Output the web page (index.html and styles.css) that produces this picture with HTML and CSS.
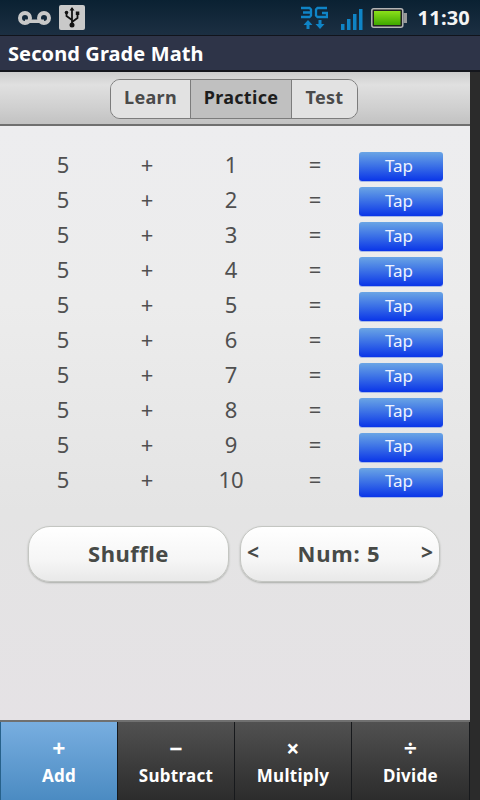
FILE: index.html
```html
<!DOCTYPE html>
<html lang="en">
<head>
<meta charset="utf-8">
<title>Second Grade Math</title>
<link rel="stylesheet" href="styles.css">
</head>
<body>
<div class="status">
  <svg class="i-vm" viewBox="0 0 33 14"><circle cx="7" cy="7" r="5" fill="none" stroke="#c8c8c8" stroke-width="4"/><circle cx="26" cy="7" r="5" fill="none" stroke="#c8c8c8" stroke-width="4"/><rect x="7" y="8.500" width="19" height="3.500" fill="#c8c8c8"/></svg>
  <svg class="i-usb" viewBox="0 0 26 25"><rect width="26" height="25" rx="2" fill="#c9c9c9"/><path d="M13 3v17M13 15L7.500 11V8M13 17l5.500-4V9" fill="none" stroke="#111" stroke-width="1.800"/><path d="M13 2l-2.500 3.500h5z" fill="#111"/><circle cx="7.500" cy="7.500" r="1.800" fill="#111"/><rect x="16.800" y="6.500" width="3.500" height="3.500" fill="#111"/><circle cx="13" cy="20" r="2.500" fill="#111"/></svg>
  <span class="grow"></span>
  <svg class="i-3g" viewBox="0 0 28 24"><path d="M1 2h8.500l1.500 1.500v6L9.500 11H1M3 6.500h8M27 2H17.500L16 3.500v6l1.500 1.500H27V7h-5" fill="none" stroke="#0f84c6" stroke-width="2.300"/><path d="M8 14l-4.500 5H6.500v4h3v-4h3zM20 23l4.500-5H21.500v-4h-3v4h-3z" fill="#0f84c6"/></svg>
  <svg class="i-sig" viewBox="0 0 22 21"><path d="M0 15h3.500v6H0zM6 10h3.500v11H6zM12 5h3.500v16H12zM18 0h3.500v21H18z" fill="#0f84c6"/></svg>
  <svg class="i-bat" viewBox="0 0 36 20"><rect x=".8" y=".8" width="31" height="18.400" rx="2" fill="#222" stroke="#b5b5b5" stroke-width="1.500"/><rect x="3" y="3" width="26.500" height="14" fill="url(#g)"/><rect x="32.500" y="5" width="3.500" height="10" fill="#999"/><defs><linearGradient id="g" x1="0" y1="0" x2="0" y2="1"><stop offset="0" stop-color="#8be01a"/><stop offset="1" stop-color="#3fa800"/></linearGradient></defs></svg>
  <span class="clock">11:30</span>
</div>
<div class="title">Second Grade Math</div>
<div class="main">
  <div class="content">
    <div class="tabbar">
      <div class="seg">
        <span class="seg-item seg-learn">Learn</span>
        <span class="seg-item seg-practice">Practice</span>
        <span class="seg-item seg-test">Test</span>
      </div>
    </div>
    <div class="panel">
      <div class="rows">
        <div class="row"><span>5</span><span>+</span><span>1</span><span>=</span><button class="tap">Tap</button></div>
        <div class="row"><span>5</span><span>+</span><span>2</span><span>=</span><button class="tap">Tap</button></div>
        <div class="row"><span>5</span><span>+</span><span>3</span><span>=</span><button class="tap">Tap</button></div>
        <div class="row"><span>5</span><span>+</span><span>4</span><span>=</span><button class="tap">Tap</button></div>
        <div class="row"><span>5</span><span>+</span><span>5</span><span>=</span><button class="tap">Tap</button></div>
        <div class="row"><span>5</span><span>+</span><span>6</span><span>=</span><button class="tap">Tap</button></div>
        <div class="row"><span>5</span><span>+</span><span>7</span><span>=</span><button class="tap">Tap</button></div>
        <div class="row"><span>5</span><span>+</span><span>8</span><span>=</span><button class="tap">Tap</button></div>
        <div class="row"><span>5</span><span>+</span><span>9</span><span>=</span><button class="tap">Tap</button></div>
        <div class="row"><span>5</span><span>+</span><span>10</span><span>=</span><button class="tap">Tap</button></div>
      </div>
      <div class="actions">
        <div class="pill"><span class="pill-text">Shuffle</span></div>
        <div class="pill pill-num"><span class="arrow">&lt;</span><span class="pill-text num-text">Num: 5</span><span class="arrow">&gt;</span></div>
      </div>
    </div>
    <div class="bottom">
      <div class="btab active"><span class="op">+</span><span>Add</span></div>
      <div class="btab"><span class="op">−</span><span>Subtract</span></div>
      <div class="btab"><span class="op">×</span><span>Multiply</span></div>
      <div class="btab"><span class="op">÷</span><span>Divide</span></div>
    </div>
  </div>
</div>
</body>
</html>
```
FILE: styles.css
```css
html, body { margin: 0; padding: 0; }
body {
  width: 480px; height: 800px; overflow: hidden;
  display: flex; flex-direction: column;
  font-family: "Noto Sans", "Open Sans", sans-serif;
  background: #2b2b2b;
}
.status {
  height: 35px; flex: none;
  display: flex; align-items: center;
  background: linear-gradient(#0a2132, #1c2f42);
  padding: 0 10px 0 18px;
  border-bottom: 1px solid #11141c;
}
.grow { flex: 1; }
.i-vm { width: 33px; height: 14px; }
.i-usb { width: 26px; height: 25px; margin-left: 8px; }
.i-3g { width: 28px; height: 24px; margin-right: 13px; }
.i-sig { width: 22px; height: 21px; margin-right: 8px; margin-top: 3px; }
.i-bat { width: 36px; height: 20px; margin-right: 11px; }
.clock { color: #f4f4f4; font-size: 20px; font-weight: 700; line-height: 35px; letter-spacing: .2px; }
.title {
  height: 33px; flex: none;
  background: #2e3448;
  color: #fff; font-size: 20px; font-weight: 700; letter-spacing: .1px;
  line-height: 34px; padding: 1px 0 0 8px;
  border-bottom: 2px solid #14161c;
}
.main { flex: 1; display: flex; min-height: 0; }
.content { width: 470px; display: flex; flex-direction: column; }
.tabbar {
  height: 52px; flex: none;
  display: flex; justify-content: center; align-items: center;
  background: linear-gradient(#cdcdcd, #e0e0e0 25%, #cfcfcf 70%, #c2c2c2);
  border-bottom: 2px solid #6f6f6f;
  box-sizing: content-box;
}
.seg {
  display: flex; height: 40px; margin: 1px 2px 0 0;
  border: 1px solid #7c7c7c; border-radius: 10px; overflow: hidden;
  font-size: 18px; font-weight: 700; letter-spacing: .3px; box-sizing: border-box;
}
.seg-item { display: flex; align-items: center; justify-content: center; height: 100%; box-sizing: border-box; padding-bottom: 4px; }
.seg-learn { width: 80px; background: #e2e2e2; color: #4a4a4a; border-right: 1px solid #7c7c7c; }
.seg-practice { width: 101px; background: #c0c0c0; color: #1d1d1d; border-right: 1px solid #7c7c7c; }
.seg-test { width: 65px; background: #e2e2e2; color: #4a4a4a; }
.panel {
  flex: 1; min-height: 0;
  background: linear-gradient(#ededef, #ececec 30%, #e4e4e4 65%, #e5e2e5);
  padding-top: 20px;
}
.rows { display: flex; flex-direction: column; padding-left: 21px; }
.row {
  display: grid; grid-template-columns: repeat(5, 84px);
  height: 35.1px; align-items: center; justify-items: center;
  font-size: 22px; color: #505050;
}
.tap {
  width: 84px; height: 29px; padding: 0 4px 3px 0; border: 0;
  margin: 6px 0 0 4px;
  border-radius: 3px;
  background: linear-gradient(#6aa5e5, #3e74e6 45%, #0a35e8);
  box-shadow: 0 1px 0 #a7b8e6;
  color: #eef3ff; font: 400 17px "Noto Sans", "Open Sans", sans-serif;
}
.actions { display: flex; gap: 11px; padding: 29px 0 0 28px; }
.pill {
  width: 201px; height: 56px; box-sizing: border-box;
  display: flex; align-items: center; justify-content: center;
  border: 1px solid #c4c6c2; border-radius: 22px;
  background: linear-gradient(#ffffff, #f6f6f6 60%, #e9e9e9);
  box-shadow: 0 1px 2px #a9aba7;
  font-size: 22px; font-weight: 700; color: #474a47;
}
.pill-text { letter-spacing: .5px; padding-bottom: 2px; }
.num-text { letter-spacing: .8px; margin-right: 2px; }
.pill-num { width: 200px; justify-content: space-between; padding: 0 6px; }
.arrow { font-size: 21px; padding-bottom: 4px; }
.bottom {
  height: 80px; flex: none;
  display: grid; grid-template-columns: 118px 117px 117px 118px;
  border-top: 2px solid #707070;
  box-sizing: border-box;
}
.btab {
  display: flex; flex-direction: column; align-items: center;
  background: linear-gradient(#515151, #3a3a3a 60%, #2c2c2c);
  border-right: 1px solid #17191c;
  color: #fff; font-size: 17px; font-weight: 700; letter-spacing: .3px; line-height: 24px;
  padding-top: 11px; box-sizing: border-box;
}
.btab.active { background: linear-gradient(#78aee0, #4b8bc2); border-left: 1px solid #27618a; }
.op { font-size: 23px; line-height: 31px; }
```
